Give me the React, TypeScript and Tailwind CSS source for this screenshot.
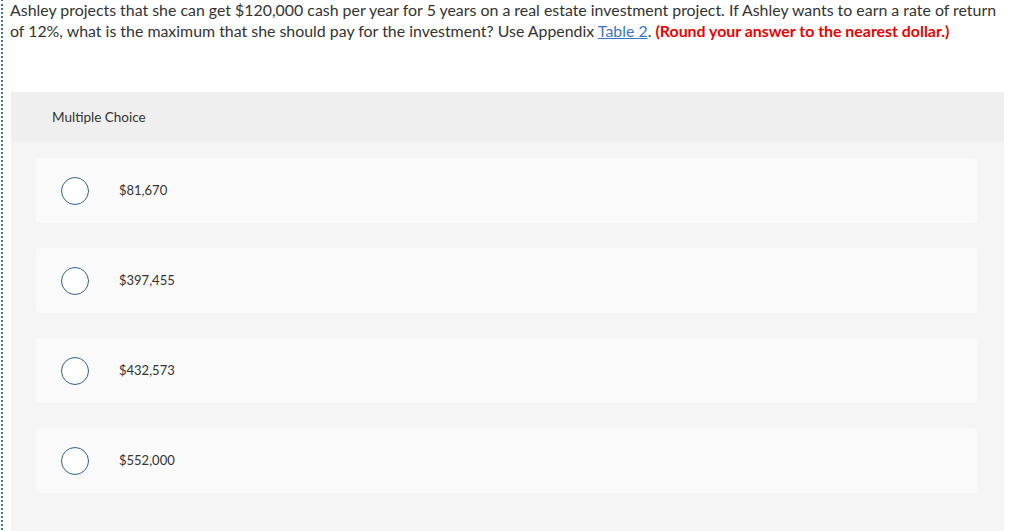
import React from "react";

const options = ["$81,670", "$397,455", "$432,573", "$552,000"];

export default function App() {
  return (
    <div
      className="w-[1024px] h-[531px] overflow-hidden bg-white relative"
      style={{ fontFamily: "Lato, 'Open Sans', 'Liberation Sans', sans-serif" }}
    >
      <div className="h-full border-l-2 border-dotted border-[#3b6fb5] ml-[1px] pl-[7px] pr-[20px]">
        <p className="text-[15.9px] leading-[21px] text-[#333] -mt-[1px]">
          Ashley projects that she can get $120,000 cash per year for 5 years on a real estate investment project. If Ashley wants to earn a rate of return of 12%, what is the maximum that she should pay for the investment? Use Appendix{" "}
          <span className="text-[#3a75c4] underline">Table 2</span>.{" "}
          <span className="font-bold text-[#ee0000]">(Round your answer to the nearest dollar.)</span>
        </p>
        <div className="mt-[51px] rounded-t-[3px] bg-[#f5f5f5] h-[460px] ml-[1px]">
          <div className="h-[50px] bg-[#efefef] flex items-center pl-[41px] text-[13.5px] text-[#333]">
            Multiple Choice
          </div>
          <div className="pt-[16px] pl-[25px] pr-[27px] flex flex-col gap-[25px]">
            {options.map((o) => (
              <div
                key={o}
                className="h-[65px] bg-[#fafafa] rounded-[4px] flex items-center pl-[25px]"
              >
                <div className="w-[28px] h-[28px] rounded-full border-[1.5px] border-[#2f5f98] bg-white" />
                <span className="ml-[30px] text-[13px] text-[#333]">{o}</span>
              </div>
            ))}
          </div>
        </div>
      </div>
    </div>
  );
}
